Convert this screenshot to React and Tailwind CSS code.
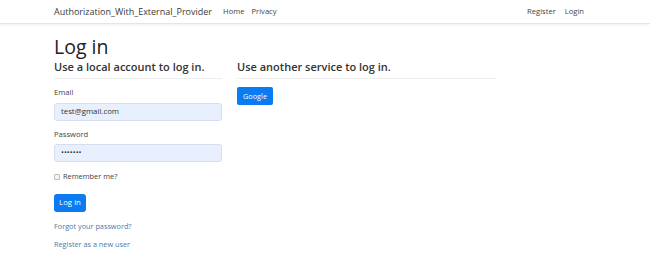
import React from "react";

const NavBar = () => (
  <nav className="h-[24px] border-b border-[#e5e5e5] shadow-[0_1px_3px_rgba(0,0,0,0.06)] bg-white">
    <div className="flex items-center h-full pl-[54px] pr-[66px]">
      <span className="text-[9px] text-[#3a3a3a] mr-[11px]">Authorization_With_External_Provider</span>
      <a className="text-[7.6px] text-[#444] mr-[7px]">Home</a>
      <a className="text-[7.6px] text-[#444]">Privacy</a>
      <div className="ml-auto flex gap-[9px]">
        <a className="text-[7.6px] text-[#444]">Register</a>
        <a className="text-[7.6px] text-[#444]">Login</a>
      </div>
    </div>
  </nav>
);

const Field = ({ label, value, top }) => (
  <div className={top}>
    <label className="block text-[7.6px] text-[#444] leading-none">{label}</label>
    <div className="mt-[6px] h-[18px] w-[168px] rounded-[3px] border border-[#d6def0] bg-[#e8f0fe] flex items-center px-[6px] text-[7.8px] text-[#333]">
      {value}
    </div>
  </div>
);

export default function App() {
  return (
    <div className="w-[650px] h-[271px] bg-white overflow-hidden" style={{ fontFamily: "'Open Sans', 'Noto Sans', sans-serif" }}>
      <NavBar />
      <div className="pl-[54px]">
        <h1 className="text-[19.5px] leading-none text-[#222] mt-[13px]">Log in</h1>
        <div className="flex gap-[15px] mt-[4px]">
          <section className="w-[168px]">
            <h4 className="text-[11px] leading-[12.5px] font-semibold text-[#333] whitespace-nowrap">Use a local account to log in.</h4>
            <hr className="mt-[5px] border-[#eee]" />
            <Field label="Email" value="test@gmail.com" top="mt-[10px]" />
            <Field label="Password" value="•••••••" top="mt-[10px]" />
            <label className="flex items-center gap-[3px] mt-[11px] text-[7.4px] text-[#444] leading-none">
              <span className="w-[6px] h-[6px] border border-[#bbb] rounded-[1px] bg-[#f4f4f4]" />
              Remember me?
            </label>
            <button className="mt-[13px] h-[18px] w-[32px] rounded-[3px] bg-[#0a7bf0] text-white text-[7.8px] flex items-center justify-center">Log in</button>
            <p className="mt-[11px] text-[7.3px] text-[#4d78ad] leading-none">Forgot your password?</p>
            <p className="mt-[11px] text-[7.3px] text-[#4d78ad] leading-none">Register as a new user</p>
          </section>
          <section className="w-[259px]">
            <h4 className="text-[11px] leading-[12.5px] font-semibold text-[#333] whitespace-nowrap">Use another service to log in.</h4>
            <hr className="mt-[5px] border-[#eee]" />
            <button className="mt-[8px] h-[18px] w-[36px] rounded-[2px] bg-[#0a7bf0] text-white text-[7.3px] flex items-center justify-center">Google</button>
          </section>
        </div>
      </div>
    </div>
  );
}
